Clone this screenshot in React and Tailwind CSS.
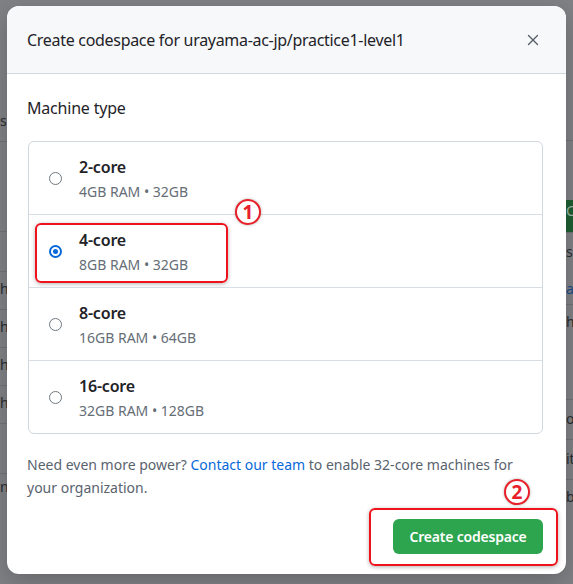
import { X } from "lucide-react";

const machines = [
  { name: "2-core", spec: "4GB RAM • 32GB" },
  { name: "4-core", spec: "8GB RAM • 32GB", checked: true },
  { name: "8-core", spec: "16GB RAM • 64GB" },
  { name: "16-core", spec: "32GB RAM • 128GB" },
];

function Marker({ n }) {
  return (
    <span className="flex h-[26px] w-[26px] items-center justify-center rounded-full border-2 border-[#e8202a] bg-white text-[19px] font-bold leading-none text-[#e8202a] shadow-[0_0_3px_rgba(0,0,0,0.3)]">
      {n}
    </span>
  );
}

function Backdrop() {
  // faint page content behind the overlay
  return (
    <div className="flex h-full w-full justify-between bg-[#7f8184] text-[14px] text-[#2a2c30]">
      <div className="flex w-[7px] flex-col overflow-hidden pt-[110px]">
        <div className="h-[32px] border-b border-[#6f7174]">s</div>
        <div className="h-[90px] border-b border-[#6f7174]" />
        <div className="h-[40px] border-b border-[#6f7174]" />
        <div className="h-[38px] border-b border-[#6f7174] pt-[6px]">hi</div>
        <div className="h-[38px] border-b border-[#6f7174] pt-[6px]">hi</div>
        <div className="h-[38px] border-b border-[#6f7174] pt-[6px]">hi</div>
        <div className="h-[38px] border-b border-[#6f7174] pt-[6px]">hi</div>
        <div className="h-[50px] border-b border-[#6f7174]" />
        <div className="pt-[2px]">nit</div>
      </div>
      <div className="flex w-[7px] flex-col overflow-hidden pt-[140px]">
        <div className="h-[60px] border-t border-[#6f7174]" />
        <div className="h-[32px] bg-[#1d5e33] text-[#9fb7a6]">C</div>
        <div className="h-[40px] border-t border-[#6f7174] pt-[8px]">s</div>
        <div className="h-[32px] pt-[6px] text-[#1c4b8a]">a</div>
        <div className="h-[36px] border-t border-[#6f7174] pt-[6px]">h</div>
        <div className="h-[60px] border-b border-[#6f7174]" />
        <div className="h-[40px] border-b border-[#6f7174] pt-[8px]">o</div>
        <div className="h-[40px] border-b border-[#6f7174] pt-[8px]">it</div>
        <div className="pt-[6px]">bo</div>
      </div>
    </div>
  );
}

export default function App() {
  return (
    <div
      className="relative h-[584px] w-[573px] overflow-hidden"
      style={{ fontFamily: '"Noto Sans", "Liberation Sans", sans-serif' }}
    >
      <Backdrop />

      {/* dialog */}
      <div className="absolute left-[7px] top-[6px] flex h-[568px] w-[559px] flex-col overflow-hidden rounded-[12px] bg-white shadow-[0_8px_24px_rgba(0,0,0,0.2)]">
        <div className="flex h-[68px] shrink-0 items-center justify-between border-b border-[#d0d7de] bg-[#f6f8fa] pl-[20px] pr-[24px]">
          <h1 className="text-[16px] tracking-[-0.3px] text-[#1f2328]">Create codespace for urayama-ac-jp/practice1-level1</h1>
          <X size={18} strokeWidth={1.8} className="text-[#57606a]" />
        </div>

        <div className="flex flex-1 flex-col pl-[20px] pr-[23px] pt-[22px]">
          <h2 className="text-[16px] leading-[24px] tracking-[-0.2px] text-[#1f2328]">Machine type</h2>

          <div className="ml-[1px] mt-[21px] overflow-hidden rounded-[6px] border border-[#d0d7de]">
            {machines.map((m, i) => (
              <div
                key={m.name}
                className={`flex items-center ${i > 0 ? "h-[73px] border-t border-[#d8dee4]" : "h-[72px]"}`}
              >
                <span className="ml-[20px] flex h-[13px] w-[13px] items-center justify-center">
                  {m.checked ? (
                    <span className="flex h-[13px] w-[13px] items-center justify-center rounded-full border-2 border-[#0969da] bg-white">
                      <span className="h-[5px] w-[5px] rounded-full bg-[#0969da]" />
                    </span>
                  ) : (
                    <span className="h-[13px] w-[13px] rounded-full border border-[#6e7781] bg-white" />
                  )}
                </span>
                <div className="ml-[17px] flex flex-col">
                  <span className="text-[16px] font-semibold leading-[24px] tracking-[-0.2px] text-[#1f2328]">{m.name}</span>
                  <span className="mt-[3px] text-[14px] leading-[20px] text-[#656d76]">{m.spec}</span>
                </div>
              </div>
            ))}
          </div>

          <p className="mt-[19px] text-[14px] leading-[23px] text-[#59636e]">
            Need even more power? <span className="text-[#0969da]">Contact our team</span> to enable 32-core machines for your organization.
          </p>

          <div className="mt-auto flex justify-end pb-[20px]">
            <button className="h-[35px] w-[150px] rounded-[6px] bg-[#2da44e] text-[14px] font-semibold tracking-[-0.2px] text-white">
              Create codespace
            </button>
          </div>
        </div>
      </div>

      {/* annotations */}
      <div className="absolute left-[35px] top-[223px] h-[60px] w-[193px] rounded-[6px] border-2 border-[#f0121b] shadow-[0_1px_4px_rgba(0,0,0,0.3)]" />
      <div className="absolute left-[235px] top-[199px]">
        <Marker n="1" />
      </div>
      <div className="absolute left-[369px] top-[508px] h-[58px] w-[189px] rounded-[6px] border-2 border-[#f0121b] shadow-[0_1px_4px_rgba(0,0,0,0.3)]" />
      <div className="absolute left-[504px] top-[479px]">
        <Marker n="2" />
      </div>
    </div>
  );
}
